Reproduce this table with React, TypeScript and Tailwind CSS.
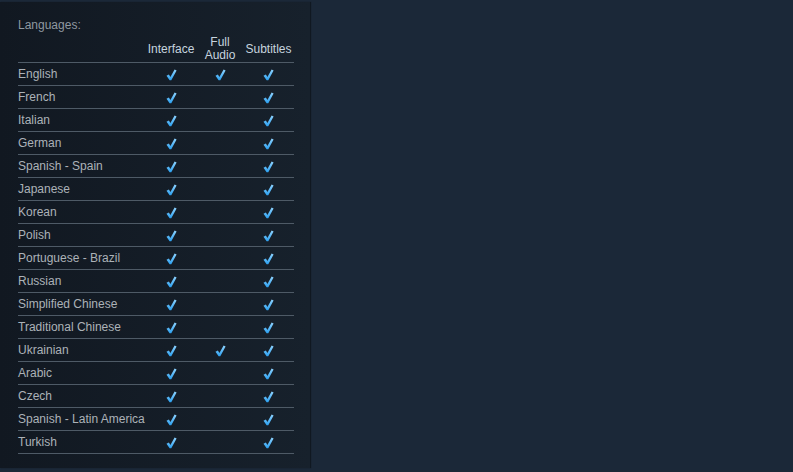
import React from "react";

type Lang = { name: string; iface: boolean; audio: boolean; subs: boolean };

const LANGUAGES: Lang[] = [
  { name: "English", iface: true, audio: true, subs: true },
  { name: "French", iface: true, audio: false, subs: true },
  { name: "Italian", iface: true, audio: false, subs: true },
  { name: "German", iface: true, audio: false, subs: true },
  { name: "Spanish - Spain", iface: true, audio: false, subs: true },
  { name: "Japanese", iface: true, audio: false, subs: true },
  { name: "Korean", iface: true, audio: false, subs: true },
  { name: "Polish", iface: true, audio: false, subs: true },
  { name: "Portuguese - Brazil", iface: true, audio: false, subs: true },
  { name: "Russian", iface: true, audio: false, subs: true },
  { name: "Simplified Chinese", iface: true, audio: false, subs: true },
  { name: "Traditional Chinese", iface: true, audio: false, subs: true },
  { name: "Ukrainian", iface: true, audio: true, subs: true },
  { name: "Arabic", iface: true, audio: false, subs: true },
  { name: "Czech", iface: true, audio: false, subs: true },
  { name: "Spanish - Latin America", iface: true, audio: false, subs: true },
  { name: "Turkish", iface: true, audio: false, subs: true },
];

function Check() {
  return (
    <svg width="11" height="12" viewBox="0 0 11 12" className="inline-block">
      <defs>
        <linearGradient id="chk" x1="0" y1="0" x2="0" y2="1">
          <stop offset="0" stopColor="#8fd3ff" />
          <stop offset="1" stopColor="#2ba0f0" />
        </linearGradient>
      </defs>
      <path d="M0.5 6.8 L2.9 5.6 L4.4 8 L8.6 0.6 L10.6 1.6 L5.3 11.2 L3.6 11.2 Z" fill="url(#chk)" />
    </svg>
  );
}

export default function App() {
  return (
    <div className="min-h-screen bg-[#1b2838] pt-[2px]" style={{ fontFamily: '"Liberation Sans", Arial, sans-serif' }}>
      <div className="w-[310px] h-[466px] bg-gradient-to-r from-[#111821] to-[#17212c] shadow-[1px_0_1px_rgba(0,0,0,0.4)] pl-[18px] pr-[16px] pt-[15px]">
        <div className="text-[12px] leading-[16px] text-[#8f98a0]">Languages:</div>
        <table className="w-[276px] table-fixed border-collapse text-[12px] text-[#acb2b8]">
          <colgroup>
            <col className="w-[127px]" />
            <col className="w-[52px]" />
            <col className="w-[46px]" />
            <col className="w-[51px]" />
          </colgroup>
          <thead>
            <tr className="border-b border-[#4e5a66]">
              <th />
              <th className="font-normal text-center align-middle leading-[13px] pt-[3px] pb-0 text-[#c6d4df]">Interface</th>
              <th className="font-normal text-center align-middle leading-[13px] pt-[3px] pb-0 text-[#c6d4df]">
                Full
                <br />
                Audio
              </th>
              <th className="font-normal text-center align-middle leading-[13px] pt-[3px] pb-0 text-[#c6d4df]">Subtitles</th>
            </tr>
          </thead>
          <tbody>
            {LANGUAGES.map((l) => (
              <tr key={l.name} className="border-b border-[#4e5a66] h-[23px]">
                <td className="whitespace-nowrap align-middle leading-[16px]">{l.name}</td>
                <td className="text-center align-middle leading-none pt-[2px]">{l.iface && <Check />}</td>
                <td className="text-center align-middle leading-none pt-[2px]">{l.audio && <Check />}</td>
                <td className="text-center align-middle leading-none pt-[2px]">{l.subs && <Check />}</td>
              </tr>
            ))}
          </tbody>
        </table>
      </div>
    </div>
  );
}
